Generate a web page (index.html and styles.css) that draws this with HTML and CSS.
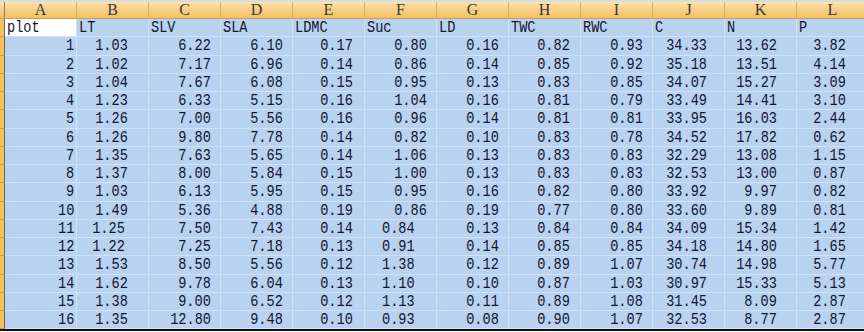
FILE: index.html
```html
<!DOCTYPE html>
<html>
<head>
<meta charset="utf-8">
<link rel="stylesheet" href="styles.css">
</head>
<body>
<div class="sheet">
  <div class="hdr">
    <div class="corner"></div>
    <div>A</div><div>B</div><div>C</div><div>D</div><div>E</div><div>F</div><div>G</div><div>H</div><div>I</div><div>J</div><div>K</div><div>L</div>
  </div>
  <div class="row names">
    <div class="rh"></div>
    <div class="active"><span>plot</span></div><div><span>LT</span></div><div><span>SLV</span></div><div><span>SLA</span></div><div><span>LDMC</span></div><div><span>Suc</span></div><div><span>LD</span></div><div><span>TWC</span></div><div><span>RWC</span></div><div><span>C</span></div><div><span>N</span></div><div><span>P</span></div>
  </div>
  <div class="row"><div class="rh"></div><div><span>1</span></div><div><span>1.03</span></div><div><span>6.22</span></div><div><span>6.10</span></div><div><span>0.17</span></div><div><span>0.80</span></div><div><span>0.16</span></div><div><span>0.82</span></div><div><span>0.93</span></div><div><span>34.33</span></div><div><span>13.62</span></div><div><span>3.82</span></div></div>
  <div class="row"><div class="rh"></div><div><span>2</span></div><div><span>1.02</span></div><div><span>7.17</span></div><div><span>6.96</span></div><div><span>0.14</span></div><div><span>0.86</span></div><div><span>0.14</span></div><div><span>0.85</span></div><div><span>0.92</span></div><div><span>35.18</span></div><div><span>13.51</span></div><div><span>4.14</span></div></div>
  <div class="row"><div class="rh"></div><div><span>3</span></div><div><span>1.04</span></div><div><span>7.67</span></div><div><span>6.08</span></div><div><span>0.15</span></div><div><span>0.95</span></div><div><span>0.13</span></div><div><span>0.83</span></div><div><span>0.85</span></div><div><span>34.07</span></div><div><span>15.27</span></div><div><span>3.09</span></div></div>
  <div class="row"><div class="rh"></div><div><span>4</span></div><div><span>1.23</span></div><div><span>6.33</span></div><div><span>5.15</span></div><div><span>0.16</span></div><div><span>1.04</span></div><div><span>0.16</span></div><div><span>0.81</span></div><div><span>0.79</span></div><div><span>33.49</span></div><div><span>14.41</span></div><div><span>3.10</span></div></div>
  <div class="row"><div class="rh"></div><div><span>5</span></div><div><span>1.26</span></div><div><span>7.00</span></div><div><span>5.56</span></div><div><span>0.16</span></div><div><span>0.96</span></div><div><span>0.14</span></div><div><span>0.81</span></div><div><span>0.81</span></div><div><span>33.95</span></div><div><span>16.03</span></div><div><span>2.44</span></div></div>
  <div class="row"><div class="rh"></div><div><span>6</span></div><div><span>1.26</span></div><div><span>9.80</span></div><div><span>7.78</span></div><div><span>0.14</span></div><div><span>0.82</span></div><div><span>0.10</span></div><div><span>0.83</span></div><div><span>0.78</span></div><div><span>34.52</span></div><div><span>17.82</span></div><div><span>0.62</span></div></div>
  <div class="row"><div class="rh"></div><div><span>7</span></div><div><span>1.35</span></div><div><span>7.63</span></div><div><span>5.65</span></div><div><span>0.14</span></div><div><span>1.06</span></div><div><span>0.13</span></div><div><span>0.83</span></div><div><span>0.83</span></div><div><span>32.29</span></div><div><span>13.08</span></div><div><span>1.15</span></div></div>
  <div class="row"><div class="rh"></div><div><span>8</span></div><div><span>1.37</span></div><div><span>8.00</span></div><div><span>5.84</span></div><div><span>0.15</span></div><div><span>1.00</span></div><div><span>0.13</span></div><div><span>0.83</span></div><div><span>0.83</span></div><div><span>32.53</span></div><div><span>13.00</span></div><div><span>0.87</span></div></div>
  <div class="row"><div class="rh"></div><div><span>9</span></div><div><span>1.03</span></div><div><span>6.13</span></div><div><span>5.95</span></div><div><span>0.15</span></div><div><span>0.95</span></div><div><span>0.16</span></div><div><span>0.82</span></div><div><span>0.80</span></div><div><span>33.92</span></div><div><span>9.97</span></div><div><span>0.82</span></div></div>
  <div class="row"><div class="rh"></div><div><span>10</span></div><div><span>1.49</span></div><div><span>5.36</span></div><div><span>4.88</span></div><div><span>0.19</span></div><div><span>0.86</span></div><div><span>0.19</span></div><div><span>0.77</span></div><div><span>0.80</span></div><div><span>33.60</span></div><div><span>9.89</span></div><div><span>0.81</span></div></div>
  <div class="row shiftb txtf"><div class="rh"></div><div><span>11</span></div><div><span>1.25</span></div><div><span>7.50</span></div><div><span>7.43</span></div><div><span>0.14</span></div><div><span>0.84</span></div><div><span>0.13</span></div><div><span>0.84</span></div><div><span>0.84</span></div><div><span>34.09</span></div><div><span>15.34</span></div><div><span>1.42</span></div></div>
  <div class="row shiftb txtf"><div class="rh"></div><div><span>12</span></div><div><span>1.22</span></div><div><span>7.25</span></div><div><span>7.18</span></div><div><span>0.13</span></div><div><span>0.91</span></div><div><span>0.14</span></div><div><span>0.85</span></div><div><span>0.85</span></div><div><span>34.18</span></div><div><span>14.80</span></div><div><span>1.65</span></div></div>
  <div class="row txtf"><div class="rh"></div><div><span>13</span></div><div><span>1.53</span></div><div><span>8.50</span></div><div><span>5.56</span></div><div><span>0.12</span></div><div><span>1.38</span></div><div><span>0.12</span></div><div><span>0.89</span></div><div><span>1.07</span></div><div><span>30.74</span></div><div><span>14.98</span></div><div><span>5.77</span></div></div>
  <div class="row txtf"><div class="rh"></div><div><span>14</span></div><div><span>1.62</span></div><div><span>9.78</span></div><div><span>6.04</span></div><div><span>0.13</span></div><div><span>1.10</span></div><div><span>0.10</span></div><div><span>0.87</span></div><div><span>1.03</span></div><div><span>30.97</span></div><div><span>15.33</span></div><div><span>5.13</span></div></div>
  <div class="row txtf"><div class="rh"></div><div><span>15</span></div><div><span>1.38</span></div><div><span>9.00</span></div><div><span>6.52</span></div><div><span>0.12</span></div><div><span>1.13</span></div><div><span>0.11</span></div><div><span>0.89</span></div><div><span>1.08</span></div><div><span>31.45</span></div><div><span>8.09</span></div><div><span>2.87</span></div></div>
  <div class="row txtf"><div class="rh"></div><div><span>16</span></div><div><span>1.35</span></div><div><span>12.80</span></div><div><span>9.48</span></div><div><span>0.10</span></div><div><span>0.93</span></div><div><span>0.08</span></div><div><span>0.90</span></div><div><span>1.07</span></div><div><span>32.53</span></div><div><span>8.77</span></div><div><span>2.87</span></div></div>
  <div class="bottom"></div>
</div>
</body>
</html>
```
FILE: styles.css
```css
html, body {
  margin: 0;
  padding: 0;
  background: #ffffff;
  overflow: hidden;
}
.sheet {
  width: 864px;
  height: 332px;
  overflow: hidden;
  font-family: "Liberation Mono", "DejaVu Sans Mono", monospace;
  font-size: 17px;
  color: #141432;
}
.hdr {
  display: grid;
  grid-template-columns: 5px repeat(12, 72px);
  height: 19px;
  box-sizing: border-box;
  border-top: 2px solid #dcdcdc;
  border-bottom: 1px solid #c9a055;
  background: linear-gradient(#fbe3b0, #f7d086 45%, #f3c163);
}
.hdr > div {
  box-sizing: border-box;
  border-right: 1px solid #dcab5a;
  text-align: center;
  line-height: 16px;
  color: #3a3a3a;
  font-family: "Liberation Serif", serif;
  font-size: 16px;
}
.hdr > .corner {
  border-right: 1px solid #8a7a60;
}
.row {
  display: grid;
  grid-template-columns: 5px repeat(12, 72px);
  height: 18.25px;
}
.row > div {
  box-sizing: border-box;
  background: #b8d2f0;
  border-right: 1px solid #d2e2f5;
  border-bottom: 1px solid #d2e2f5;
  line-height: 18px;
  text-align: right;
  white-space: nowrap;
  overflow: hidden;
}
.row span {
  display: inline-block;
  transform: scaleX(0.8);
  transform-origin: right center;
}
.row > .rh {
  background: #f4c25f;
  border-right: 1px solid #6e6350;
  border-bottom: 1px solid #d49a3c;
}
.row > :nth-child(2) { padding-right: 2px; }
.row > :nth-child(3) { padding-right: 20px; }
.row > :nth-child(4) { padding-right: 9px; }
.row > :nth-child(5) { padding-right: 9px; }
.row > :nth-child(6) { padding-right: 11px; }
.row > :nth-child(7) { padding-right: 9px; }
.row > :nth-child(8) { padding-right: 9px; }
.row > :nth-child(9) { padding-right: 10px; }
.row > :nth-child(10) { padding-right: 9px; }
.row > :nth-child(11) { padding-right: 17px; }
.row > :nth-child(12) { padding-right: 19px; }
.row > :nth-child(13) { padding-right: 22px; }
.shiftb > :nth-child(3) { padding-right: 23px; }
.txtf > :nth-child(7) { text-align: left; padding-left: 17px; padding-right: 0; }
.txtf > :nth-child(7) span,
.names span { transform-origin: left center; }
.names > div {
  text-align: left;
  padding: 0 0 0 2px !important;
}
.names > .rh { padding: 0 !important; }
.names > .active {
  background: #ffffff;
}
.bottom {
  height: 2px;
  background: #111111;
}
```
